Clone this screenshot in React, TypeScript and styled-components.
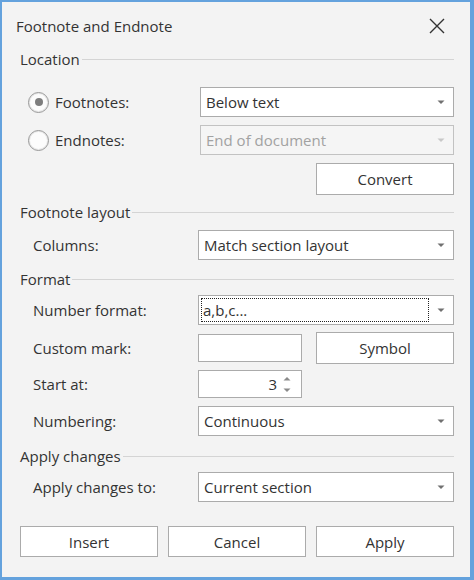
import styled, { createGlobalStyle } from 'styled-components';

const colors = {
  frame: '#64a2dd',
  dialog: '#f3f3f3',
  text: '#333',
  disabledText: '#a2a2a2',
  border: '#ababab',
  disabledBorder: '#c2c2c2',
  rule: '#d4d4d4',
  arrow: '#707070',
};

const GlobalStyle = createGlobalStyle`
  html, body {
    margin: 0;
    padding: 0;
  }
  body {
    font-family: 'Open Sans', 'Noto Sans', sans-serif;
  }
`;

const ArrowDown = ({ disabled }: { disabled?: boolean }) => (
  <svg width="8" height="5" viewBox="0 0 8 5">
    <path d="M0.5 0.5 H7.5 L4 4 Z" fill={disabled ? '#c8c8c8' : colors.arrow} />
  </svg>
);

const ComboBox = ({
  value,
  disabled,
  focused,
}: {
  value: string;
  disabled?: boolean;
  focused?: boolean;
}) => (
  <Combo $disabled={disabled}>
    <ComboValue $focused={focused}>{value}</ComboValue>
    <ComboArrow>
      <ArrowDown disabled={disabled} />
    </ComboArrow>
  </Combo>
);

const App = (): JSX.Element => (
  <>
    <GlobalStyle />
    <Window>
      <TitleBar>
        <Title>Footnote and Endnote</Title>
        <CloseButton type="button" aria-label="Close">
          <svg width="16" height="16" viewBox="0 0 16 16">
            <path d="M1 1 L15 15 M15 1 L1 15" stroke="#333" strokeWidth="1.4" />
          </svg>
        </CloseButton>
      </TitleBar>
      <Body>
        <GroupHeader>Location</GroupHeader>
        <Rows $pad={18} $gap={8}>
          <Row $labelWidth={172} $indent={8}>
            <RadioLabel>
              <Radio $checked />
              Footnotes:
            </RadioLabel>
            <ComboBox value="Below text" />
          </Row>
          <Row $labelWidth={172} $indent={8}>
            <RadioLabel>
              <Radio />
              Endnotes:
            </RadioLabel>
            <ComboBox value="End of document" disabled />
          </Row>
          <Row $labelWidth={172} $indent={8} $height={32}>
            <span />
            <RightAligned>
              <Button $height={32}>Convert</Button>
            </RightAligned>
          </Row>
        </Rows>

        <GroupHeader $top={7}>Footnote layout</GroupHeader>
        <Rows $pad={8} $gap={7}>
          <Row $labelWidth={165} $indent={13}>
            <Label>Columns:</Label>
            <ComboBox value="Match section layout" />
          </Row>
        </Rows>

        <GroupHeader $top={9}>Format</GroupHeader>
        <Rows $pad={6} $gap={7}>
          <Row $labelWidth={165} $indent={13}>
            <Label>Number format:</Label>
            <ComboBox value="a,b,c..." focused />
          </Row>
          <Row $labelWidth={165} $indent={13}>
            <Label>Custom mark:</Label>
            <Pair>
              <TextBox />
              <Button $height={32}>Symbol</Button>
            </Pair>
          </Row>
          <Row $labelWidth={165} $indent={13}>
            <Label>Start at:</Label>
            <Pair>
              <Spin>
                <SpinValue>3</SpinValue>
                <SpinArrows>
                  <svg width="8" height="5" viewBox="0 0 8 5">
                    <path d="M0.5 4.5 H7.5 L4 1 Z" fill="#8a8a8a" />
                  </svg>
                  <svg width="8" height="5" viewBox="0 0 8 5">
                    <path d="M0.5 0.5 H7.5 L4 4 Z" fill="#8a8a8a" />
                  </svg>
                </SpinArrows>
              </Spin>
              <span />
            </Pair>
          </Row>
          <Row $labelWidth={165} $indent={13}>
            <Label>Numbering:</Label>
            <ComboBox value="Continuous" />
          </Row>
        </Rows>

        <GroupHeader $top={10}>Apply changes</GroupHeader>
        <Rows $pad={6} $gap={7}>
          <Row $labelWidth={165} $indent={13}>
            <Label>Apply changes to:</Label>
            <ComboBox value="Current section" />
          </Row>
        </Rows>

        <Footer>
          <Button $height={31}>Insert</Button>
          <Button $height={31}>Cancel</Button>
          <Button $height={31}>Apply</Button>
        </Footer>
      </Body>
    </Window>
  </>
);

const Window = styled.div`
  box-sizing: border-box;
  display: flex;
  flex-direction: column;
  width: 474px;
  height: 580px;
  background: ${colors.dialog};
  border-style: solid;
  border-color: ${colors.frame};
  border-width: 2px 4px 3px 2px;
  color: ${colors.text};
  font-size: 15px;
`;

const TitleBar = styled.div`
  display: flex;
  justify-content: space-between;
  align-items: center;
  height: 47px;
  padding: 0 21px 0 14px;
`;

const Title = styled.div`
  font-size: 15px;
  color: #333;
`;

const CloseButton = styled.button`
  display: flex;
  justify-content: center;
  align-items: center;
  width: 24px;
  height: 24px;
  padding: 0;
  background: none;
  border: none;
`;

const Body = styled.div`
  display: flex;
  flex-direction: column;
  padding: 0 16px 0 18px;
`;

const GroupHeader = styled.div<{ $top?: number }>`
  display: flex;
  align-items: center;
  gap: 2px;
  height: 20px;
  margin-top: ${({ $top }) => $top ?? 0}px;
  white-space: nowrap;

  &::after {
    content: '';
    flex: 1;
    height: 1px;
    background: ${colors.rule};
  }
`;

const Rows = styled.div<{ $pad: number; $gap: number }>`
  display: flex;
  flex-direction: column;
  gap: ${({ $gap }) => $gap}px;
  padding-top: ${({ $pad }) => $pad}px;
`;

const Row = styled.div<{ $labelWidth: number; $indent: number; $height?: number }>`
  display: grid;
  grid-template-columns: ${({ $labelWidth }) => $labelWidth}px 1fr;
  align-items: center;
  height: ${({ $height }) => $height ?? 30}px;
  padding-left: ${({ $indent }) => $indent}px;
`;

const Label = styled.span`
  white-space: nowrap;
`;

const RadioLabel = styled.label`
  display: flex;
  align-items: center;
  gap: 6px;
`;

const Radio = styled.span<{ $checked?: boolean }>`
  box-sizing: border-box;
  display: flex;
  justify-content: center;
  align-items: center;
  width: 21px;
  height: 21px;
  background: #fcfcfc;
  border: 1px solid #979797;
  border-radius: 50%;
  box-shadow: inset 0 0 0 1px #e6e6e6;

  &::after {
    content: '';
    display: ${({ $checked }) => ($checked ? 'block' : 'none')};
    width: 8px;
    height: 8px;
    background: #7d7d7d;
    border-radius: 50%;
  }
`;

const Combo = styled.div<{ $disabled?: boolean }>`
  box-sizing: border-box;
  display: flex;
  align-items: center;
  height: 30px;
  padding: 2px 0 2px 2px;
  background: ${({ $disabled }) => ($disabled ? '#f5f5f5' : '#fff')};
  border: 1px solid ${({ $disabled }) => ($disabled ? colors.disabledBorder : colors.border)};
  color: ${({ $disabled }) => ($disabled ? colors.disabledText : colors.text)};
`;

const ComboValue = styled.div<{ $focused?: boolean }>`
  box-sizing: border-box;
  flex: 1;
  display: flex;
  align-items: center;
  height: 100%;
  padding-left: ${({ $focused }) => ($focused ? 1 : 2)}px;
  border: 1px dotted ${({ $focused }) => ($focused ? '#222' : 'transparent')};
  white-space: nowrap;
`;

const ComboArrow = styled.div`
  display: flex;
  justify-content: center;
  align-items: center;
  width: 24px;
`;

const RightAligned = styled.div`
  display: flex;
  justify-content: flex-end;
`;

const Button = styled.button<{ $height: number }>`
  box-sizing: border-box;
  width: 138px;
  height: ${({ $height }) => $height}px;
  padding: 0;
  background: #fff;
  border: 1px solid ${colors.border};
  color: ${colors.text};
  font-family: inherit;
  font-size: 15px;
`;

const Pair = styled.div`
  display: grid;
  grid-template-columns: 1fr 138px;
  align-items: center;
  gap: 14px;
`;

const TextBox = styled.div`
  box-sizing: border-box;
  height: 28px;
  background: #fff;
  border: 1px solid ${colors.border};
`;

const Spin = styled.div`
  box-sizing: border-box;
  display: flex;
  align-items: center;
  height: 28px;
  background: #fff;
  border: 1px solid ${colors.border};
`;

const SpinValue = styled.span`
  flex: 1;
  padding-right: 6px;
  text-align: right;
`;

const SpinArrows = styled.div`
  display: flex;
  flex-direction: column;
  justify-content: center;
  gap: 7px;
  width: 14px;
  margin-right: 4px;
`;

const Footer = styled.div`
  display: grid;
  grid-template-columns: repeat(3, 138px);
  gap: 10px;
  margin-top: 24px;
`;

export default App;
